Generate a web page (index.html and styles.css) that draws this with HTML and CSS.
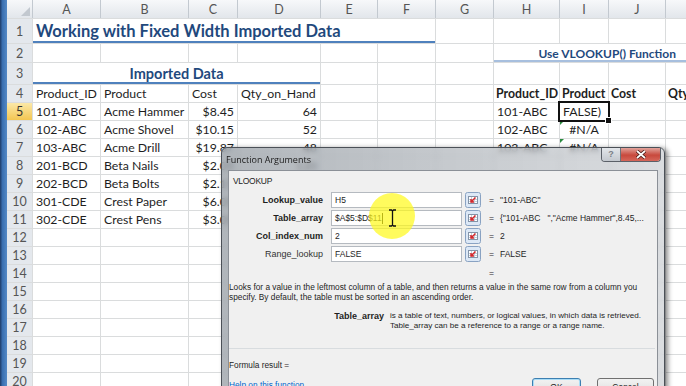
FILE: index.html
```html
<!DOCTYPE html>
<html lang="en">
<head>
    <meta charset="UTF-8">
    <title>Working with Fixed Width Imported Data</title>
    <link rel="stylesheet" href="styles.css">
</head>
<body>
<div class="app">
    <div class="frame-edge"></div>

    <div class="sheet">
        <div class="row cols">
            <div class="corner"></div><div>A</div><div>B</div><div>C</div><div>D</div><div>E</div><div>F</div><div>G</div><div>H</div><div class="active">I</div><div>J</div><div></div>
        </div>
        <div class="row r1">
            <div class="rh">1</div><div class="title span6">Working with Fixed Width Imported Data</div><div></div><div></div><div></div><div></div><div></div>
        </div>
        <div class="row r2">
            <div class="rh">2</div><div></div><div></div><div></div><div></div><div></div><div></div><div></div><div class="subtitle span4">Use VLOOKUP() Function</div>
        </div>
        <div class="row r3">
            <div class="rh">3</div><div class="heading span4">Imported Data</div><div></div><div></div><div></div><div></div><div></div><div></div><div></div>
        </div>
        <div class="row">
            <div class="rh">4</div><div>Product_ID</div><div>Product</div><div>Cost</div><div>Qty_on_Hand</div><div></div><div></div><div></div><div class="b">Product_ID</div><div class="b">Product</div><div class="b">Cost</div><div class="b">Qty</div>
        </div>
        <div class="row">
            <div class="rh active">5</div><div>101-ABC</div><div>Acme Hammer</div><div class="num">$8.45</div><div class="num">64</div><div></div><div></div><div></div><div>101-ABC</div><div class="editing">FALSE)</div><div></div><div></div>
        </div>
        <div class="row">
            <div class="rh">6</div><div>102-ABC</div><div>Acme Shovel</div><div class="num">$10.15</div><div class="num">52</div><div></div><div></div><div></div><div>102-ABC</div><div class="err">#N/A</div><div></div><div></div>
        </div>
        <div class="row">
            <div class="rh">7</div><div>103-ABC</div><div>Acme Drill</div><div class="num">$19.87</div><div class="num">48</div><div></div><div></div><div></div><div>103-ABC</div><div class="err">#N/A</div><div></div><div></div>
        </div>
        <div class="row">
            <div class="rh">8</div><div>201-BCD</div><div>Beta Nails</div><div class="num">$2.05</div><div class="num">120</div><div></div><div></div><div></div><div></div><div></div><div></div><div></div>
        </div>
        <div class="row">
            <div class="rh">9</div><div>202-BCD</div><div>Beta Bolts</div><div class="num">$2.15</div><div class="num">95</div><div></div><div></div><div></div><div></div><div></div><div></div><div></div>
        </div>
        <div class="row">
            <div class="rh">10</div><div>301-CDE</div><div>Crest Paper</div><div class="num">$6.05</div><div class="num">36</div><div></div><div></div><div></div><div></div><div></div><div></div><div></div>
        </div>
        <div class="row">
            <div class="rh">11</div><div>302-CDE</div><div>Crest Pens</div><div class="num">$3.05</div><div class="num">210</div><div></div><div></div><div></div><div></div><div></div><div></div><div></div>
        </div>
        <div class="row"><div class="rh">12</div><div></div><div></div><div></div><div></div><div></div><div></div><div></div><div></div><div></div><div></div><div></div></div>
        <div class="row"><div class="rh">13</div><div></div><div></div><div></div><div></div><div></div><div></div><div></div><div></div><div></div><div></div><div></div></div>
        <div class="row"><div class="rh">14</div><div></div><div></div><div></div><div></div><div></div><div></div><div></div><div></div><div></div><div></div><div></div></div>
        <div class="row"><div class="rh">15</div><div></div><div></div><div></div><div></div><div></div><div></div><div></div><div></div><div></div><div></div><div></div></div>
        <div class="row"><div class="rh">16</div><div></div><div></div><div></div><div></div><div></div><div></div><div></div><div></div><div></div><div></div><div></div></div>
        <div class="row"><div class="rh">17</div><div></div><div></div><div></div><div></div><div></div><div></div><div></div><div></div><div></div><div></div><div></div></div>
        <div class="row"><div class="rh">18</div><div></div><div></div><div></div><div></div><div></div><div></div><div></div><div></div><div></div><div></div><div></div></div>
        <div class="row"><div class="rh">19</div><div></div><div></div><div></div><div></div><div></div><div></div><div></div><div></div><div></div><div></div><div></div></div>
        <div class="row"><div class="rh">20</div><div></div><div></div><div></div><div></div><div></div><div></div><div></div><div></div><div></div><div></div><div></div></div>
    </div>

    <!-- Function Arguments dialog -->
    <div class="dialog">
        <div class="dlg-title">
            <span>Function Arguments</span>
            <div class="caption-btns">
                <div class="cap-help">?</div>
                <div class="cap-close">
                    <svg width="12" height="9" viewBox="0 0 12 9"><path d="M2 1l8 7M10 1 2 8" stroke="#4a1c18" stroke-width="3.4"/><path d="M2 1l8 7M10 1 2 8" stroke="#fff" stroke-width="1.7"/></svg>
                </div>
            </div>
        </div>
        <div class="dlg-body">
            <div class="fn-name">VLOOKUP</div>
            <div class="args">
                <div class="arg">
                    <label class="req">Lookup_value</label>
                    <div class="field">H5</div>
                    <span class="ref"><svg width="16" height="16" viewBox="0 0 16 16"><rect x=".5" y=".5" width="15" height="15" rx="2" fill="#dce8f6" stroke="#89a2c2"/><rect x="3.5" y="4.5" width="9" height="7" fill="#fff" stroke="#8494a8"/><path d="M4 7.5h8M4 9.5h8M6.5 5v6M9.5 5v6" stroke="#c5ced8"/><path d="M10.5 5.5 6.5 9.5M6 7v3h3" stroke="#d3262b" stroke-width="1.5" fill="none"/></svg></span>
                    <span class="eq">=</span>
                    <span class="val">"101-ABC"</span>
                </div>
                <div class="arg">
                    <label class="req">Table_array</label>
                    <div class="field">$A$5:$D$11<i class="caret"></i></div>
                    <span class="ref"><svg width="16" height="16" viewBox="0 0 16 16"><rect x=".5" y=".5" width="15" height="15" rx="2" fill="#dce8f6" stroke="#89a2c2"/><rect x="3.5" y="4.5" width="9" height="7" fill="#fff" stroke="#8494a8"/><path d="M4 7.5h8M4 9.5h8M6.5 5v6M9.5 5v6" stroke="#c5ced8"/><path d="M10.5 5.5 6.5 9.5M6 7v3h3" stroke="#d3262b" stroke-width="1.5" fill="none"/></svg></span>
                    <span class="eq">=</span>
                    <span class="val">{"101-ABC &nbsp;&nbsp;","Acme Hammer",8.45,...</span>
                </div>
                <div class="arg">
                    <label class="req">Col_index_num</label>
                    <div class="field">2</div>
                    <span class="ref"><svg width="16" height="16" viewBox="0 0 16 16"><rect x=".5" y=".5" width="15" height="15" rx="2" fill="#dce8f6" stroke="#89a2c2"/><rect x="3.5" y="4.5" width="9" height="7" fill="#fff" stroke="#8494a8"/><path d="M4 7.5h8M4 9.5h8M6.5 5v6M9.5 5v6" stroke="#c5ced8"/><path d="M10.5 5.5 6.5 9.5M6 7v3h3" stroke="#d3262b" stroke-width="1.5" fill="none"/></svg></span>
                    <span class="eq">=</span>
                    <span class="val">2</span>
                </div>
                <div class="arg">
                    <label>Range_lookup</label>
                    <div class="field">FALSE</div>
                    <span class="ref"><svg width="16" height="16" viewBox="0 0 16 16"><rect x=".5" y=".5" width="15" height="15" rx="2" fill="#dce8f6" stroke="#89a2c2"/><rect x="3.5" y="4.5" width="9" height="7" fill="#fff" stroke="#8494a8"/><path d="M4 7.5h8M4 9.5h8M6.5 5v6M9.5 5v6" stroke="#c5ced8"/><path d="M10.5 5.5 6.5 9.5M6 7v3h3" stroke="#d3262b" stroke-width="1.5" fill="none"/></svg></span>
                    <span class="eq">=</span>
                    <span class="val">FALSE</span>
                </div>
            </div>
            <div class="result-eq"><span class="eq">=</span></div>
            <p class="desc">Looks for a value in the leftmost column of a table, and then returns a value in the same row from a column you<br>specify. By default, the table must be sorted in an ascending order.</p>
            <div class="arg-help">
                <b>Table_array</b>
                <p>is a table of text, numbers, or logical values, in which data is retrieved.<br>Table_array can be a reference to a range or a range name.</p>
            </div>
            <div class="sep"></div>
            <div class="formula">Formula result =</div>
            <div class="dlg-foot">
                <a href="#">Help on this function</a>
                <div class="btns">
                    <button class="ok">OK</button>
                    <button class="cancel">Cancel</button>
                </div>
            </div>
        </div>
    </div>

    <!-- recorder's cursor highlight -->
    <div class="spot"></div>
    <svg class="ibeam" width="9" height="18" viewBox="0 0 9 18"><path d="M1 1h2.5l1 1 1-1H8M4.5 2v14M1 17h2.5l1-1 1 1H8" stroke="#111" stroke-width="1.3" fill="none"/></svg>
</div>
</body>
</html>
```

FILE: styles.css
```css
* {
    box-sizing: border-box;
}
body {
    margin: 0;
    width: 686px;
    height: 386px;
    overflow: hidden;
    background: #fff;
    font-family: Lato, "Liberation Sans", sans-serif;
    color: #1e1e1e;
}
.app {
    position: relative;
    display: flex;
    width: 686px;
    height: 386px;
    overflow: hidden;
}
.frame-edge {
    width: 7px;
    flex: none;
    background: linear-gradient(to right, #1d3a66, #3a6fb0 35%, #5489c6);
}

/* spreadsheet grid */
.sheet {
    flex: 1;
    display: flex;
    flex-direction: column;
    gap: 1px;
    background: #dadcdd;
}
.row {
    flex: none;
    display: grid;
    grid-template-columns: 25px 67px 87px 48px 82px 56px 57px 57px 65px 48px 56px 1fr;
    column-gap: 1px;
    height: 17px;
    font-size: 12.3px;
}
.row > div {
    background: #fff;
    display: flex;
    align-items: center;
    padding: 0 3px;
    white-space: nowrap;
    overflow: hidden;
}
.row.cols {
    height: 18px;
    background: #c3c9d0;
}
.row.cols > div {
    background: linear-gradient(#f7f8fa, #e2e6eb);
    justify-content: center;
    color: #555;
    font-size: 12.5px;
}
.row.r1 { height: 24px; }
.row.r2 { height: 18px; }
.row.r3 { height: 21px; }
.row > .rh {
    background: #e4e8ed;
    justify-content: center;
    color: #555;
    font-size: 12.5px;
    padding: 0;
}
.row > .active {
    background: linear-gradient(#fbe8a8, #f3c652);
    color: #333;
}
.corner {
    position: relative;
}
.corner::after {
    content: "";
    position: absolute;
    right: 2px;
    bottom: 2px;
    border-left: 9px solid transparent;
    border-bottom: 9px solid #c2c8cf;
}
.span6 { grid-column: span 6; }
.span4 { grid-column: span 4; }
.row > .title {
    font-size: 16.5px;
    font-weight: bold;
    color: #1f497d;
    box-shadow: inset 0 -2px #4f81bd;
}
.row > .heading {
    justify-content: center;
    font-size: 14.5px;
    font-weight: bold;
    color: #1f497d;
    box-shadow: inset 0 -2px #4f81bd;
}
.row > .subtitle {
    justify-content: flex-end;
    padding-right: 10px;
    font-size: 12px;
    font-weight: bold;
    color: #1f497d;
    box-shadow: inset 0 -2px #a7bfde;
}
.row > .num {
    justify-content: flex-end;
}
.row > .b {
    font-weight: bold;
    padding: 0 2px;
}
.row > .err {
    justify-content: center;
    position: relative;
    overflow: visible;
}
.err::before {
    content: "";
    position: absolute;
    left: 0;
    top: 0;
    border-top: 4px solid #2a8a3e;
    border-right: 4px solid transparent;
}
.row > .editing {
    position: relative;
    z-index: 1;
    overflow: visible;
    outline: 2px solid #111;
    outline-offset: 0;
}
.editing::after {
    content: "";
    position: absolute;
    right: -4px;
    bottom: -4px;
    width: 5px;
    height: 5px;
    background: #111;
    border: 1px solid #fff;
}

/* dialog window */
.dialog {
    position: absolute;
    left: 221px;
    top: 147px;
    width: 444px;
    height: 252px;
    display: flex;
    flex-direction: column;
    padding: 0 6px;
    border: 1px solid #4b5057;
    border-radius: 6px 6px 0 0;
    background: linear-gradient(to right, rgba(150, 157, 164, 0.75), rgba(196, 200, 205, 0.62));
    backdrop-filter: blur(2.5px);
    box-shadow: 3px 1px 5px rgba(0, 0, 0, 0.45);
    font-family: "Liberation Sans", Arial, sans-serif;
}
.dlg-title {
    height: 22px;
    flex: none;
    display: flex;
    justify-content: space-between;
}
.dlg-title span {
    margin: 5px 0 0 -2px;
    font-family: "Open Sans", sans-serif;
    font-size: 9px;
    color: #1a1a1a;
}
.caption-btns {
    display: flex;
    height: 14px;
    margin-right: -3px;
    border: 1px solid #5b6068;
    border-top: none;
    border-radius: 0 0 4px 4px;
    overflow: hidden;
}
.cap-help {
    width: 19px;
    background: linear-gradient(#e3e6ea, #c3c8ce);
    border-right: 1px solid #6d7279;
    color: #7a7f86;
    font-size: 9px;
    font-weight: bold;
    text-align: center;
    line-height: 13px;
}
.cap-close {
    width: 39px;
    display: flex;
    align-items: center;
    justify-content: center;
    background: linear-gradient(#e2a49c, #c8493d 55%, #d5665a);
}
.dlg-body {
    flex: 1;
    background: #f0f0f0;
    border: 1px solid #8b9097;
    font-size: 8.3px;
    color: #1e1e1e;
}
.fn-name {
    height: 14px;
    margin: 3px 0 0 4px;
    line-height: 14px;
    font-size: 8.5px;
    letter-spacing: -0.3px;
}
.args {
    display: flex;
    flex-direction: column;
    gap: 2px;
    margin-top: 4px;
}
.arg {
    display: flex;
    align-items: center;
    height: 16px;
}
.arg label {
    width: 94px;
    text-align: right;
    font-size: 9px;
    color: #333;
}
.arg label.req {
    font-weight: bold;
    color: #1e1e1e;
}
.field {
    width: 131px;
    height: 16px;
    margin-left: 8px;
    padding-left: 3px;
    background: #fff;
    border: 1px solid #b5bac0;
    font-size: 8.5px;
    line-height: 14px;
    display: flex;
    align-items: center;
}
.caret {
    width: 1px;
    height: 11px;
    background: #000;
}
.ref {
    display: flex;
    margin-left: 3px;
}
.eq {
    margin-left: 8px;
    font-size: 8.5px;
}
.val {
    margin-left: 6px;
    font-size: 8.5px;
}
.result-eq {
    height: 12px;
    margin-top: 5px;
    padding-left: 252px;
    line-height: 12px;
}
.desc {
    margin: 3px 0 0;
    font-size: 8.3px;
    line-height: 10px;
}
.arg-help {
    display: flex;
    margin-top: 9px;
}
.arg-help b {
    flex: none;
    width: 155px;
    text-align: right;
    font-size: 9px;
    line-height: 10px;
}
.arg-help p {
    flex: none;
    margin: 0 0 0 6px;
    font-size: 8.1px;
    line-height: 10px;
}
.sep {
    height: 1px;
    margin: 17px 2px 0 0;
    background: #d8dcdf;
}
.formula {
    margin-top: 10px;
    line-height: 12px;
}
.dlg-foot {
    display: flex;
    justify-content: space-between;
    margin-top: 7px;
}
.dlg-foot a {
    margin-top: 2px;
    color: #0066cc;
    text-decoration: none;
}
.btns {
    display: flex;
    gap: 16px;
    margin-right: 3px;
}
.btns button {
    height: 18px;
    padding: 0;
    border: 1px solid #707070;
    border-radius: 3px;
    background: linear-gradient(#f2f2f2, #dcdcdc);
    font: 8.5px "Liberation Sans", Arial, sans-serif;
    color: #1e1e1e;
}
.btns .ok {
    width: 49px;
    border-color: #3c7fb1;
    box-shadow: inset 0 0 0 1px #a9dcf6;
}
.btns .cancel {
    width: 57px;
}

/* cursor highlight from the screen recorder */
.spot {
    position: absolute;
    left: 369px;
    top: 193px;
    width: 46px;
    height: 46px;
    border-radius: 50%;
    background: rgba(255, 250, 30, 0.72);
}
.ibeam {
    position: absolute;
    left: 388px;
    top: 209px;
}
```
